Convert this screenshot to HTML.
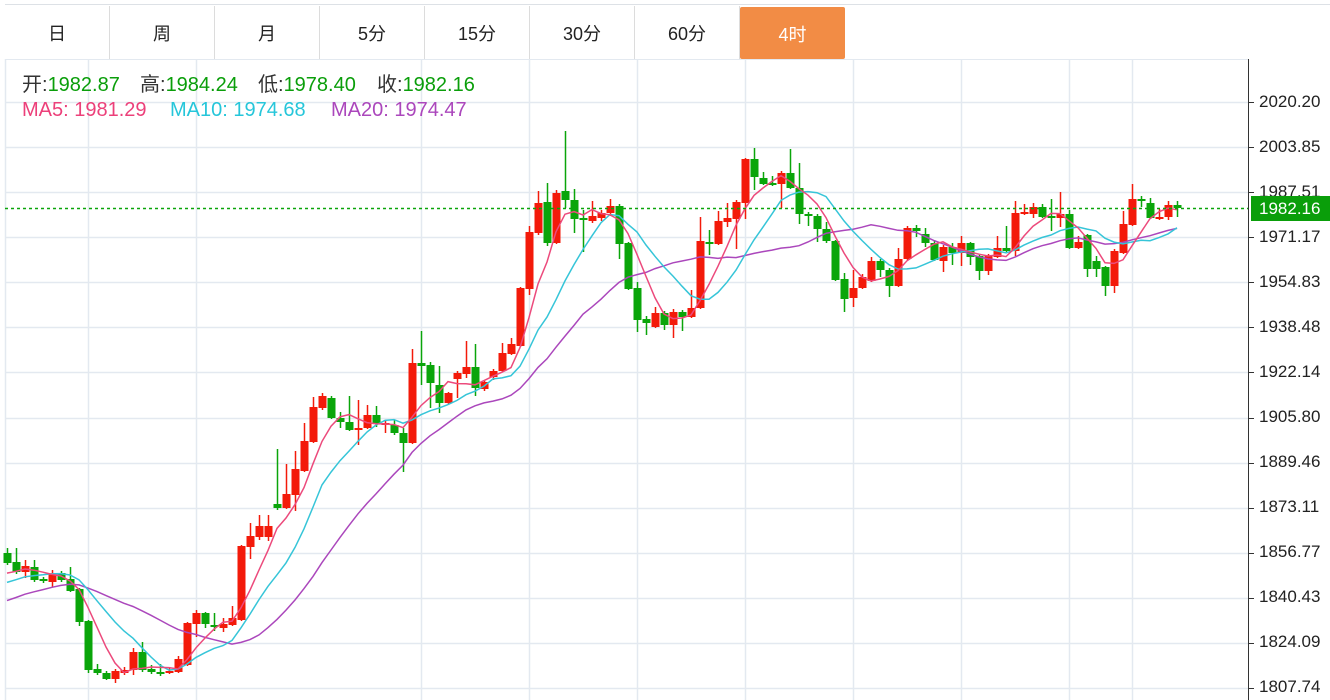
<!DOCTYPE html>
<html><head><meta charset="utf-8"><style>
html,body{margin:0;padding:0;background:#fff;width:1330px;height:700px;overflow:hidden;font-family:"Liberation Sans","Noto Sans CJK SC",sans-serif}
#tabs{position:absolute;left:5px;top:4px;width:1325px;height:54px;border-top:1px solid #dde1e6}
.tab{position:absolute;top:1px;height:53px;width:105px;text-align:center;line-height:56px;font-size:18px;color:#222;border-right:1px solid #dcdcdc;box-sizing:border-box}
.tab.on{background:#f28c45;color:#fff;border-right:none;border-radius:2px}
.lg{position:absolute;font-size:20px;white-space:nowrap}
.k{color:#333}.g{color:#0a9e0a}
.ax{position:absolute;left:1259px;font-size:17px;color:#222}
</style></head><body>
<svg id="c" width="1330" height="700" style="position:absolute;left:0;top:0"></svg>
<div id="tabs">
<div class="tab" style="left:0">日</div>
<div class="tab" style="left:105px">周</div>
<div class="tab" style="left:210px">月</div>
<div class="tab" style="left:315px">5分</div>
<div class="tab" style="left:420px">15分</div>
<div class="tab" style="left:525px">30分</div>
<div class="tab" style="left:630px">60分</div>
<div class="tab on" style="left:735px;top:2px;height:52px">4时</div>
</div>
<div class="lg" style="left:22px;top:68px"><span class="k">开:</span><span class="g">1982.87</span></div>
<div class="lg" style="left:140px;top:68px"><span class="k">高:</span><span class="g">1984.24</span></div>
<div class="lg" style="left:258px;top:68px"><span class="k">低:</span><span class="g">1978.40</span></div>
<div class="lg" style="left:377px;top:68px"><span class="k">收:</span><span class="g">1982.16</span></div>
<div class="lg" style="left:22px;top:99px;color:#ec407a">MA5: 1981.29</div>
<div class="lg" style="left:170px;top:99px;color:#26c6da">MA10: 1974.68</div>
<div class="lg" style="left:331px;top:99px;color:#ab47bc">MA20: 1974.47</div>
<div class="ax" style="top:92px">2020.20</div>
<div class="ax" style="top:137px">2003.85</div>
<div class="ax" style="top:182px">1987.51</div>
<div class="ax" style="top:227px">1971.17</div>
<div class="ax" style="top:272px">1954.83</div>
<div class="ax" style="top:317px">1938.48</div>
<div class="ax" style="top:362px">1922.14</div>
<div class="ax" style="top:407px">1905.80</div>
<div class="ax" style="top:452px">1889.46</div>
<div class="ax" style="top:497px">1873.11</div>
<div class="ax" style="top:542px">1856.77</div>
<div class="ax" style="top:587px">1840.43</div>
<div class="ax" style="top:632px">1824.09</div>
<div class="ax" style="top:677px">1807.74</div>
<div style="position:absolute;left:1251px;top:196px;width:79px;height:25px;background:#0a9e0a;color:#fff;font-size:17px;line-height:25px;padding-left:8px;box-sizing:border-box">1982.16</div>
<script>
var R=1,G=0;
var d=[[G,553,563,548,565],[G,562,572,548,574],[R,566,572,560,578],[G,567,580,560,582],[G,579,580,577,583],[R,574,582,570,587],[G,573,580,571,582],[G,579,591,567,592],[G,589,622,588,626],[G,621,670,620,673],
[G,669,673,664,675],[G,673,679,671,680],[R,671,679,669,683],[R,670,673,667,675],[R,652,670,648,675],[G,652,670,642,672],[G,669,672,665,674],[G,672,673,664,676],[R,671,673,668,674],[R,659,672,656,673],
[R,623,665,622,666],[R,613,624,610,637],[G,613,624,612,628],[G,625,627,613,631],[R,624,628,618,632],[R,618,625,606,626],[R,546,620,545,621],[R,536,547,523,559],[R,526,537,515,540],[R,526,537,515,541],
[G,504,508,449,510],[R,494,508,464,509],[R,469,495,451,511],[R,441,471,423,472],[R,407,442,397,443],[R,396,408,393,410],[G,398,418,396,419],[G,418,422,412,428],[G,422,430,396,431],[R,428,429,400,445],
[R,415,428,405,429],[G,415,424,406,427],[R,423,424,420,433],[G,425,433,420,435],[G,433,443,428,472],[R,363,443,349,444],[G,363,366,331,385],[G,365,383,362,408],[G,385,403,366,413],[R,393,403,392,404],
[R,373,379,371,398],[R,367,374,341,378],[G,367,388,344,396],[R,382,389,380,391],[R,371,377,369,380],[R,353,371,343,372],[R,344,354,338,355],[R,288,346,287,347],[R,232,289,226,295],[R,203,233,191,235],
[G,202,243,183,246],[R,193,243,190,244],[G,191,200,131,208],[G,200,219,189,233],[G,218,220,210,252],[R,216,221,201,223],[R,213,218,210,221],[R,206,213,199,216],[G,206,244,204,259],[G,243,289,242,290],
[G,288,320,282,332],[G,319,323,316,335],[R,313,327,307,328],[G,313,325,311,330],[R,312,325,309,338],[G,312,317,310,331],[R,308,317,290,318],[R,241,308,217,309],[G,242,244,230,255],[R,221,244,211,245],
[R,218,222,203,227],[R,202,219,200,249],[R,159,203,158,219],[G,159,177,148,190],[G,178,184,172,185],[G,183,185,176,186],[R,173,184,171,208],[G,173,188,149,189],[G,188,214,163,224],[G,214,216,212,226],
[G,216,229,214,242],[G,229,241,222,243],[G,241,280,240,281],[G,279,299,273,312],[R,288,298,270,307],[R,277,288,274,289],[R,261,281,257,282],[G,261,270,259,277],[G,270,286,268,297],[R,259,286,248,287],
[R,228,259,226,260],[G,228,231,225,237],[G,234,243,228,247],[G,243,260,240,261],[R,247,261,245,272],[G,247,253,243,265],[R,243,253,236,266],[G,243,257,242,265],[G,256,271,254,280],[R,256,271,254,275],
[R,248,257,236,258],[G,248,251,226,252],[R,213,251,201,256],[R,212,214,204,215],[R,207,214,203,218],[G,207,217,204,218],[G,216,218,199,231],[R,214,218,192,227],[G,214,248,210,249],[R,242,248,236,249],
[G,235,269,234,277],[G,261,269,256,277],[G,267,286,266,296],[R,251,286,249,293],[R,224,253,211,254],[R,199,225,184,226],[G,199,201,196,207],[G,203,218,198,219],[R,217,219,209,220],[R,205,217,201,220],[G,205,208,201,217]];
var s='';
function L(x1,y1,x2,y2,c,w,da){s+='<line x1="'+x1+'" y1="'+y1+'" x2="'+x2+'" y2="'+y2+'" stroke="'+c+'" stroke-width="'+(w||1)+'"'+(da?' stroke-dasharray="'+da+'"':'')+'/>';}
L(5,59.5,1248,59.5,'#e3e9f0');
for(var i=0;i<14;i++){var y=Math.round(102+i*45.08)+.5;L(5,y,1248,y,'#e3e9f0',1.5);L(1249,y,1254,y,'#333');}
[5,88,196,421,529,637,745,853,961,1069,1132].forEach(function(x){L(x+.5,59,x+.5,700,'#e3e9f0',1.5);});
L(1248.5,59,1248.5,700,'#333');
var closes=[];for(var i=0;i<19;i++)closes.push(635-i*3.6);
d.forEach(function(c){closes.push(c[0]?c[1]:c[2]);});
function ma(n,col){var p=[];for(var i=0;i<d.length;i++){var k=i+19,sum=0;for(var j=0;j<n;j++)sum+=closes[k-j];p.push((7+i*9)+','+(sum/n).toFixed(1));}s+='<polyline points="'+p.join(' ')+'" fill="none" stroke="'+col+'" stroke-width="1.5"/>';}
d.forEach(function(c,i){var x=7+i*9,col=c[0]?'#f31a0a':'#0aa50a';L(x+.5,c[3],x+.5,c[4],col,1.5);s+='<rect x="'+(x-3.5)+'" y="'+c[1]+'" width="8" height="'+Math.max(2,c[2]-c[1])+'" fill="'+col+'"/>';});
ma(20,'#ab47bc');ma(10,'#36c5d8');ma(5,'#ec4a7c');
L(5,208.5,1248,208.5,'#0aa50a',1.5,'3,3');
document.getElementById('c').innerHTML=s;
</script>
</body></html>
